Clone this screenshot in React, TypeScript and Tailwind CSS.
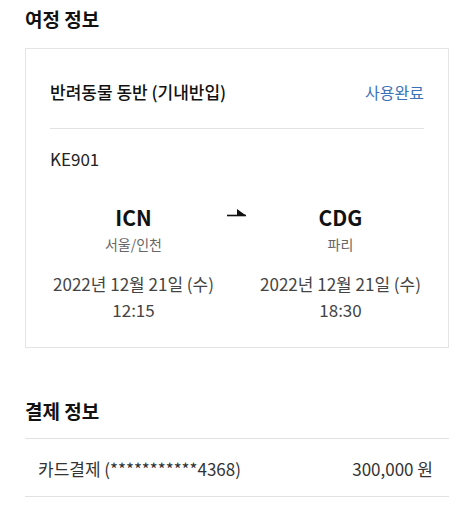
import React from "react";

const font = { fontFamily: '"Noto Sans CJK KR", "Noto Sans", sans-serif' };

function Arrow() {
  return (
    <svg width="20" height="10" viewBox="0 0 20 10" className="block">
      <line x1="0" y1="8.5" x2="19" y2="8.5" stroke="#111" strokeWidth="1.6" />
      <polygon points="10,2 19,8.5 10,8.5" fill="#111" />
    </svg>
  );
}

function Place({ code, city, date, time }: { code: string; city: string; date: string; time: string }) {
  return (
    <div className="flex flex-col items-center">
      <div className="text-[21px] leading-[28px] font-bold text-[#111]">{code}</div>
      <div className="text-[14px] leading-[20px] text-[#666] mt-[3px]">{city}</div>
      <div className="text-[17px] leading-[24px] text-[#444] mt-[18px] whitespace-nowrap">{date}</div>
      <div className="text-[17px] leading-[24px] text-[#444] mt-[2px]">{time}</div>
    </div>
  );
}

export default function App() {
  return (
    <div className="w-[474px] h-[530px] bg-white px-[25px] overflow-hidden" style={font}>
      <div className="pt-[5px] text-[19px] leading-[28px] font-bold text-[#111]">여정 정보</div>
      <div className="mt-[15px] border border-[#e4e4e4] px-[24px] pb-[25px]">
        <div className="flex items-center justify-between pt-[30px] pb-[23px] border-b border-[#e2e2e2]">
          <div className="text-[17px] leading-[26px] font-medium text-[#111]">반려동물 동반 (기내반입)</div>
          <div className="text-[16px] leading-[26px] text-[#3a72b8]">사용완료</div>
        </div>
        <div className="pt-[18px] text-[17px] leading-[24px] text-[#222]">KE901</div>
        <div className="grid grid-cols-[1fr_40px_1fr] mt-[32px]">
          <Place code="ICN" city="서울/인천" date="2022년 12월 21일 (수)" time="12:15" />
          <div className="flex justify-center pt-[4px]">
            <Arrow />
          </div>
          <Place code="CDG" city="파리" date="2022년 12월 21일 (수)" time="18:30" />
        </div>
      </div>
      <div className="mt-[49px] text-[19px] leading-[28px] font-bold text-[#111]">결제 정보</div>
      <div className="mt-[13px] border-t border-b border-[#e2e2e2] flex items-center justify-between pl-[13px] pr-[16px] pt-[18px] pb-[15px]">
        <div className="text-[17px] leading-[24px] text-[#333]">카드결제 (***********4368)</div>
        <div className="text-[17px] leading-[24px] text-[#333]">300,000 원</div>
      </div>
    </div>
  );
}
